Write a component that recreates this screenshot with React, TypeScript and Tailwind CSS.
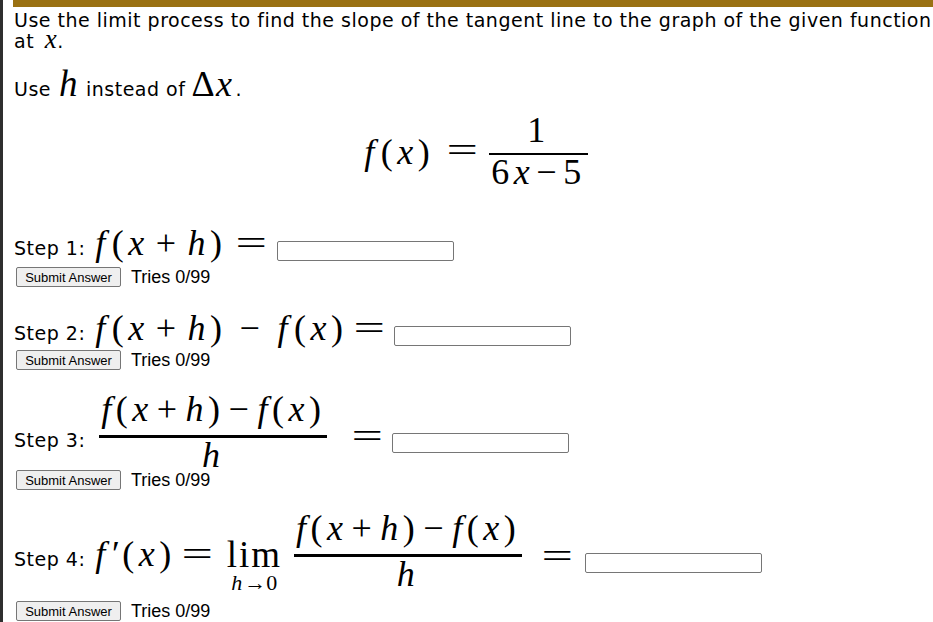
import React from "react";

const sans = "font-['DejaVu_Sans',Verdana,sans-serif] text-[19px] tracking-[0.5px]";
const serif = "font-['Liberation_Serif','Times_New_Roman',serif]";
const arial = "font-['Liberation_Sans',Arial,sans-serif]";
const math = `${serif} text-[36px] tracking-[4.5px]`;

const V = ({ children }: { children: React.ReactNode }) => (
  <span className="italic">{children}</span>
);

// KaTeX's "=" is longer than the Times one, so stretch it
const Eq = ({ className = "" }: { className?: string }) => (
  <span className={`inline-flex w-[31px] justify-center tracking-normal ${serif} ${className}`}>
    <span className="inline-block scale-x-[1.55]">=</span>
  </span>
);

const Op = ({ children, gap = "mx-[7px]" }: { children: React.ReactNode; gap?: string }) => (
  <span className={`inline-block ${gap}`}>{children}</span>
);

const Fx = ({ arg }: { arg: React.ReactNode }) => (
  <>
    <V>f</V>
    <span className="ml-[2px]">(</span>
    {arg}
    <span>)</span>
  </>
);

const Answer = ({ className = "" }: { className?: string }) => (
  <input
    type="text"
    className={`h-[20px] w-[177px] shrink-0 rounded-[2px] border border-[#767676] bg-white px-1 text-[13px] ${arial} ${className}`}
  />
);

const Submit = ({ className = "" }: { className?: string }) => (
  <div className={`flex items-center pl-[3px] ${className}`}>
    <button
      className={`h-[20px] w-[105px] rounded-[2px] border border-[#767676] bg-[#efefef] text-[13px] leading-none text-black ${arial}`}
    >
      Submit Answer
    </button>
    <span className={`ml-[10px] text-[18px] leading-none ${arial}`}>Tries 0/99</span>
  </div>
);

// (f(x+h) - f(x)) / h, 83px tall with the bar at 46px
const DiffQuotient = ({ className = "" }: { className?: string }) => (
  <span className={`inline-flex flex-col items-center ${math} ${className}`}>
    <span className="px-[2px] pb-[6px] leading-[40px]">
      <V>f</V>(<V>x</V>
      <Op gap="mx-[4px]">+</Op>
      <V>h</V>)<Op gap="mx-[4px]">−</Op>
      <V>f</V>(<V>x</V>)
    </span>
    <span className="h-[3px] w-full bg-black" />
    <span className="leading-[34px]">
      <V>h</V>
    </span>
  </span>
);

export default function App() {
  return (
    <div className="flex min-h-screen bg-white text-black">
      <div className="w-[3px] shrink-0 bg-[#2f2f2f]" />
      <div className="min-w-0 flex-1 overflow-hidden pl-[10px]">
        <div className="h-[7px] bg-[#9a7112]" />

        <div className={`pl-[1px] pt-[4px] leading-[19px] ${sans}`}>
          <div className="whitespace-nowrap">
            Use the limit process to find the slope of the tangent line to the graph of the given function
          </div>
          <div>
            at <span className={`${serif} ml-[4px] text-[27px] italic`}>x</span>.
          </div>

          <div className="mt-[14px] flex items-baseline">
            <span>Use</span>
            <span className={`${serif} mx-[8px] text-[37px] italic leading-none`}>h</span>
            <span>instead of</span>
            <span className={`${serif} ml-[6px] text-[36px] leading-none`}>
              Δ<span className="ml-[1px] italic">x</span>
            </span>
            <span className="ml-[3px]">.</span>
          </div>
        </div>

        {/* given function */}
        <div className={`mt-[9px] flex items-center justify-center pl-[6px] ${math}`}>
          <span className="mt-[4px]">
            <Fx arg={<V>x</V>} />
          </span>
          <Eq className="mx-[12px]" />
          <span className="inline-flex flex-col items-center">
            <span className="pb-[4px] leading-[38px]">1</span>
            <span className="h-[2px] w-full bg-black" />
            <span className="px-[2px] leading-[34px]">
              6<V>x</V>
              <Op gap="mx-[2px]">−</Op>5
            </span>
          </span>
        </div>

        {/* step 1 */}
        <div className="mt-[27px] flex items-baseline pl-[1px]">
          <span className={sans}>Step 1:</span>
          <span className={`${math} ml-[10px] leading-[40px]`}>
            <Fx arg={<><V>x</V><Op>+</Op><V>h</V></>} />
          </span>
          <Eq className="ml-[9px] mr-[10px] text-[36px]" />
          <Answer />
        </div>
        <Submit className="mt-[-3px]" />

        {/* step 2 */}
        <div className="mt-[14px] flex items-baseline pl-[1px]">
          <span className={sans}>Step 2:</span>
          <span className={`${math} ml-[10px] leading-[40px]`}>
            <Fx arg={<><V>x</V><Op>+</Op><V>h</V></>} />
            <Op gap="mx-[13px]">−</Op>
            <Fx arg={<V>x</V>} />
          </span>
          <Eq className="ml-[6px] mr-[10px] text-[36px]" />
          <Answer />
        </div>
        <Submit className="mt-[-5px]" />

        {/* step 3 */}
        <div className="mt-[19px] flex items-start pl-[1px]">
          <span className={`${sans} mt-[40px] leading-[22px]`}>Step 3:</span>
          <DiffQuotient className="ml-[14px]" />
          <Eq className="ml-[24px] mr-[10px] mt-[27px] text-[36px] leading-[40px]" />
          <Answer className="mt-[44px]" />
        </div>
        <Submit className="mt-[-2px]" />

        {/* step 4 */}
        <div className="mt-[18px] flex items-start pl-[1px]">
          <span className={`${sans} mt-[40px] leading-[22px]`}>Step 4:</span>
          <span className={`${math} ml-[10px] mt-[26px] leading-[40px]`}>
            <V>f</V>
            <span className="italic">′</span>(<V>x</V>)
          </span>
          <Eq className="ml-[6px] mr-[10px] mt-[26px] text-[36px] leading-[40px]" />
          <span className={`${serif} ml-[4px] mt-[31px] inline-flex flex-col items-center`}>
            <span className="text-[37px] leading-[32px] tracking-[2px]">lim</span>
            <span className="text-[22px] leading-[24px]">
              <V>h</V>
              <span className="ml-[2px]">→</span>0
            </span>
          </span>
          <DiffQuotient className="ml-[12px]" />
          <Eq className="ml-[20px] mr-[12px] mt-[28px] text-[36px] leading-[40px]" />
          <Answer className="mt-[45px]" />
        </div>
        <Submit className="mt-[6px]" />
      </div>
    </div>
  );
}
